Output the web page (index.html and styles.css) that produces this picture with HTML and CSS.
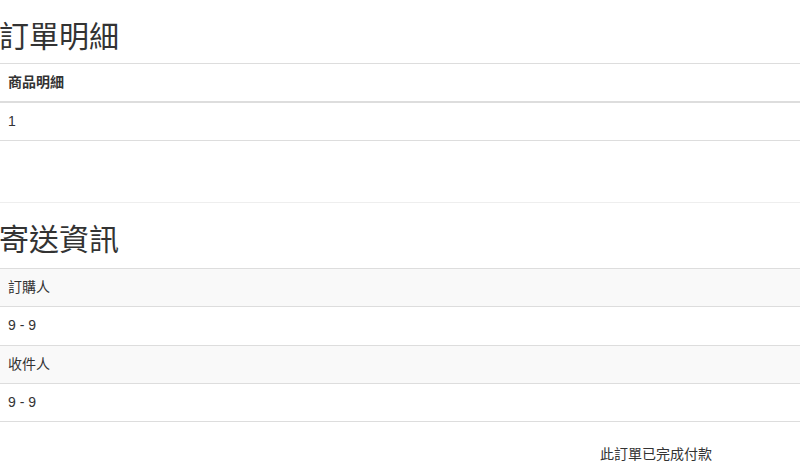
FILE: index.html
```html
<!DOCTYPE html>
<html lang="zh-Hant">
<head>
  <title>訂單明細</title>
  <meta name="viewport" content="width=device-width, initial-scale=1">
  <link rel="stylesheet" href="styles.css">
</head>
<body>
  <div class="container">
    <h2>訂單明細</h2>
    <table class="table">
      <thead>
        <tr><th>商品明細</th></tr>
      </thead>
      <tbody>
        <tr><td>1</td></tr>
      </tbody>
    </table>

    <hr>

    <h2 class="title-shipping">寄送資訊</h2>
    <table class="table table-striped">
      <tbody>
        <tr><td>訂購人</td></tr>
        <tr><td>9 - 9</td></tr>
        <tr><td>收件人</td></tr>
        <tr><td>9 - 9</td></tr>
      </tbody>
    </table>

    <div class="row">
      <div class="col-status">此訂單已完成付款</div>
    </div>
  </div>
</body>
</html>
```

FILE: styles.css
```css
html {
  font-family: "Liberation Sans", "Noto Sans CJK TC", sans-serif;
}
body {
  margin: 0;
  color: #333;
  font-size: 14px;
  line-height: 21px;
  background: #fff;
}
.container {
  padding: 0;
}
h2 {
  font-size: 30px;
  font-weight: 400;
  line-height: 33px;
  margin: 20px 0 10px -1px;
}
.title-shipping {
  margin-bottom: 12px;
}
.table {
  width: 100%;
  border-collapse: collapse;
  border-spacing: 0;
  margin-bottom: 61px;
}
.table th,
.table td {
  padding: 8px;
  text-align: left;
  border-top: 1px solid #ddd;
}
.table th {
  font-weight: bold;
  font-size: 14px;
  border-bottom: 2px solid #ddd;
}
.table tbody tr:last-child td {
  border-bottom: 1px solid #ddd;
}
.table-striped {
  margin-bottom: 0;
}
.table-striped td {
  line-height: 21.3px;
}
.table-striped tbody tr:nth-child(odd) {
  background-color: #f9f9f9;
}
hr {
  margin: 0;
  border: 0;
  border-top: 1px solid #eee;
}
.row {
  display: flex;
  justify-content: flex-end;
  padding-top: 22px;
}
.col-status {
  width: 288px;
  text-align: center;
}
```
